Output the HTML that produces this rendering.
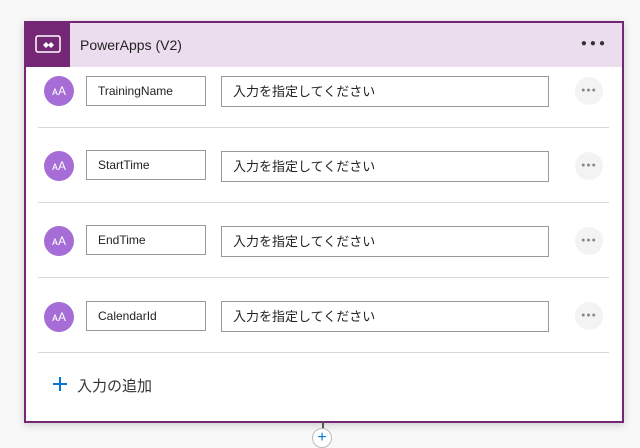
<!DOCTYPE html><html><head><style>
body{margin:0;width:640px;height:444px;background:#f8f8f8;font-family:"Liberation Sans","Noto Sans CJK JP",sans-serif;position:relative;overflow:hidden}
.card{position:absolute;left:24px;top:21px;width:596px;height:398px;border:2px solid #742774;background:#fff;box-shadow:0 2px 8px rgba(0,0,0,.18)}
.hdr{position:absolute;left:0;top:0;right:0;height:44px;background:#ebdded}
.ic{position:absolute;left:0;top:0;width:44px;height:44px;background:#742774}
.ttl{position:absolute;left:54px;top:14px;font-size:14px;color:#222}
.dots{position:absolute;right:14px;top:15px;font-size:10px;letter-spacing:3px;color:#333}
.av{position:absolute;left:18px;width:30px;height:30px;border-radius:50%;background:#a56dd5;color:#fff;font-size:12px;text-align:center;line-height:31px}
.nm{position:absolute;left:60px;height:30px;border:1px solid #999;font-size:12px;line-height:28px;padding-left:11px;box-sizing:border-box;width:120px;color:#222}
.vl{position:absolute;left:195px;width:328px;height:31px;border:1px solid #999;box-sizing:border-box;font-size:13px;line-height:29px;padding-left:11px;color:#222}
.mo{position:absolute;left:549px;width:28px;height:28px;border-radius:50%;background:#f3f3f3;color:#888;text-align:center;font-size:7px;line-height:28px;letter-spacing:1px}
.sep{position:absolute;left:12px;width:571px;height:1px;background:#d8d8d8}
</style></head><body>
<div class="card">
<div class="hdr"><div class="ic"><svg width="44" height="44"><rect x="10" y="13" width="24" height="16" rx="2" fill="none" stroke="#fff" stroke-width="1.5"/><rect x="12" y="18" width="20" height="8" fill="#742774"/><path d="M17 22l3-3 3 3-3 3z M22 22l3-3 3 3-3 3z" fill="#fff"/></svg></div><div class="ttl">PowerApps (V2)</div><div class="dots">●●●</div></div>
</div>
<div style="position:absolute;left:26px;top:23px;width:596px;height:396px">
<div class="av" style="top:53px">ᴀA</div><div class="nm" style="top:53px">TrainingName</div><div class="vl" style="top:53px">入力を指定してください</div><div class="mo" style="top:54px">●●●</div>
<div class="sep" style="top:104px"></div>
<div class="av" style="top:128px">ᴀA</div><div class="nm" style="top:127px">StartTime</div><div class="vl" style="top:128px">入力を指定してください</div><div class="mo" style="top:129px">●●●</div>
<div class="sep" style="top:179px"></div>
<div class="av" style="top:203px">ᴀA</div><div class="nm" style="top:202px">EndTime</div><div class="vl" style="top:203px">入力を指定してください</div><div class="mo" style="top:204px">●●●</div>
<div class="sep" style="top:254px"></div>
<div class="av" style="top:279px">ᴀA</div><div class="nm" style="top:278px">CalendarId</div><div class="vl" style="top:278px">入力を指定してください</div><div class="mo" style="top:279px">●●●</div>
<div class="sep" style="top:329px"></div>
<svg style="position:absolute;left:27px;top:354px" width="14" height="14"><path d="M7 0V14M0 7H14" stroke="#0078d4" stroke-width="2"/></svg>
<div style="position:absolute;left:51px;top:352px;font-size:15px;color:#333">入力の追加</div>
</div>
<div style="position:absolute;left:322px;top:421px;width:2px;height:8px;background:#555"></div>
<div style="position:absolute;left:312px;top:428px;width:20px;height:20px;border-radius:50%;border:1px solid #bbb;background:#fff;box-sizing:border-box;color:#0078d4;text-align:center;line-height:18px;font-size:16px">+</div>
</body></html>
